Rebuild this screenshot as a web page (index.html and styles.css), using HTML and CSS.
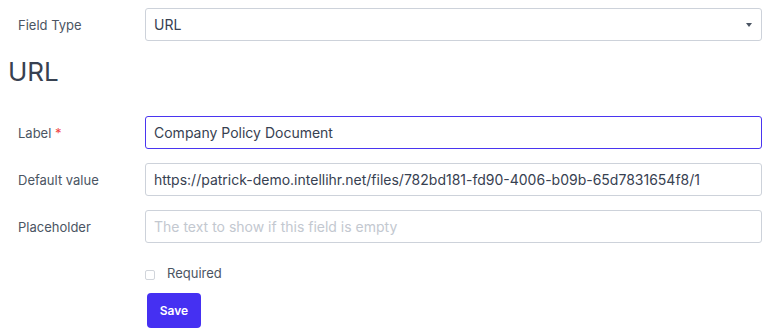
FILE: index.html
```html
<!DOCTYPE html>
<html lang="en">
<head>
  <meta charset="UTF-8">
  <title>Field settings</title>
  <link rel="stylesheet" href="styles.css">
</head>
<body>
  <div class="field-form">
    <div class="form-row type-row">
      <label class="form-label">Field Type</label>
      <div class="select-box">
        <span>URL</span>
        <span class="select-arrow"></span>
      </div>
    </div>

    <h2 class="field-title">URL</h2>

    <div class="form-row">
      <label class="form-label">Label <span class="required-mark">*</span></label>
      <input type="text" class="text-input is-focused" value="Company Policy Document">
    </div>
    <div class="form-row">
      <label class="form-label">Default value</label>
      <input type="text" class="text-input" value="https://patrick-demo.intellihr.net/files/782bd181-fd90-4006-b09b-65d7831654f8/1">
    </div>
    <div class="form-row">
      <label class="form-label">Placeholder</label>
      <input type="text" class="text-input" placeholder="The text to show if this field is empty">
    </div>

    <div class="form-row check-row">
      <span></span>
      <label class="check-label"><span class="check-box"></span>Required</label>
    </div>
    <div class="form-row">
      <span></span>
      <div><button class="save-button">Save</button></div>
    </div>
  </div>
</body>
</html>
```

FILE: styles.css
```css
body {
  margin: 8px;
  font-family: 'Inter', 'Noto Sans', sans-serif;
  color: #374151;
  background: #fff;
}

.field-form {
  padding-right: 13px;
}

.form-row {
  display: grid;
  grid-template-columns: 137px 1fr;
  align-items: center;
  margin-bottom: 14px;
}

.type-row {
  margin-bottom: 0;
}

.form-label {
  padding-left: 10px;
  font-size: 13px;
  color: #4b5563;
}

.required-mark {
  color: #ef4444;
}

.select-box {
  display: flex;
  align-items: center;
  justify-content: space-between;
  height: 33px;
  box-sizing: border-box;
  padding: 0 9px 0 8px;
  border: 1px solid #cdd2da;
  border-radius: 3px;
  font-size: 14px;
  color: #374151;
}

.select-arrow {
  width: 0;
  height: 0;
  border-left: 3px solid transparent;
  border-right: 3px solid transparent;
  border-top: 4px solid #4b5563;
}

.field-title {
  font-size: 26px;
  font-weight: 400;
  line-height: 34px;
  margin: 14px 0 27px;
  color: #374151;
}

.text-input {
  height: 33px;
  box-sizing: border-box;
  padding: 0 8px;
  border: 1px solid #cdd2da;
  border-radius: 3px;
  font-family: 'Inter', 'Noto Sans', sans-serif;
  font-size: 14px;
  color: #374151;
  outline: none;
}

.text-input.is-focused {
  border-color: #4a35f0;
}

.text-input::placeholder {
  color: #c3c8d0;
}

.check-row {
  margin-top: 22px;
  margin-bottom: 12px;
}

.check-label {
  display: flex;
  align-items: center;
  font-size: 13px;
  color: #4b5563;
}

.check-box {
  position: relative;
  top: 2px;
  width: 8px;
  height: 8px;
  border: 1px solid #d1d5db;
  border-radius: 2px;
  margin-right: 12px;
}

.save-button {
  margin-left: 2px;
  width: 54px;
  height: 35px;
  border: none;
  border-radius: 4px;
  background: #4530f2;
  color: #fff;
  font-family: 'Inter', 'Noto Sans', sans-serif;
  font-size: 12px;
  font-weight: 600;
}
```
